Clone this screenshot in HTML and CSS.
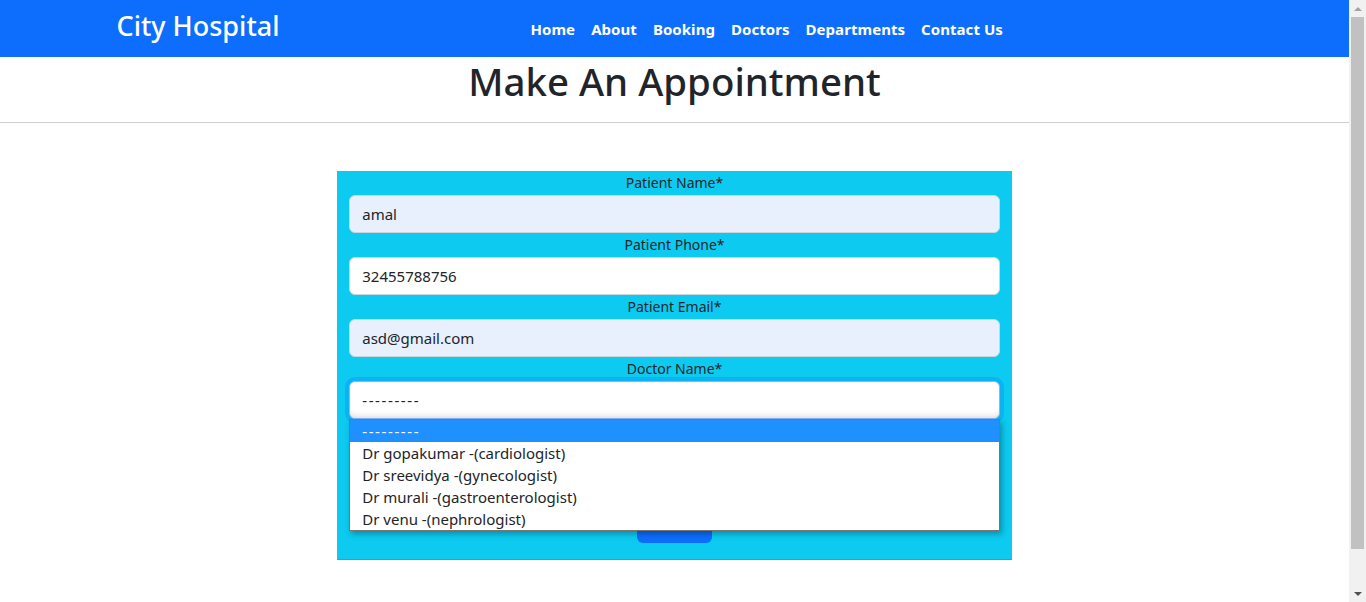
FILE: index.html
```html
<!DOCTYPE html>
<html lang="en">
<head>
<meta charset="utf-8">
<title>City Hospital - Make An Appointment</title>
<link rel="stylesheet" href="styles.css">
</head>
<body>
<nav class="navbar">
  <div class="container nav-inner">
    <a class="brand" href="#">City Hospital</a>
    <ul class="nav-links">
      <li><a href="#">Home</a></li>
      <li><a href="#">About</a></li>
      <li><a href="#">Booking</a></li>
      <li><a href="#">Doctors</a></li>
      <li><a href="#">Departments</a></li>
      <li><a href="#">Contact Us</a></li>
    </ul>
  </div>
</nav>
<main class="page">
  <h1 class="title">Make An Appointment</h1>
  <hr class="rule">
  <form class="booking">
    <label class="lbl">Patient Name*</label>
    <input class="field autofill" type="text" value="amal">
    <label class="lbl">Patient Phone*</label>
    <input class="field" type="text" value="32455788756">
    <label class="lbl">Patient Email*</label>
    <input class="field autofill" type="text" value="asd@gmail.com">
    <label class="lbl">Doctor Name*</label>
    <div class="select-wrap">
      <div class="field select-box"><span class="dashes">---------</span></div>
      <ul class="dropdown">
        <li class="opt active"><span class="dashes">---------</span></li>
        <li class="opt">Dr gopakumar -(cardiologist)</li>
        <li class="opt">Dr sreevidya -(gynecologist)</li>
        <li class="opt">Dr murali -(gastroenterologist)</li>
        <li class="opt">Dr venu -(nephrologist)</li>
      </ul>
    </div>
    <label class="lbl">Booking Date*</label>
    <input class="field" type="text" value="">
    <div class="btn-row"><button class="btn" type="button">Submit</button></div>
  </form>
</main>
<div class="scrollbar" aria-hidden="true">
  <div class="sb-arrow up"></div>
  <div class="sb-track"><div class="sb-thumb"></div></div>
  <div class="sb-arrow down"></div>
</div>
</body>
</html>
```
FILE: styles.css
```css
* { box-sizing: border-box; }
html { overflow: hidden; }
html, body { margin: 0; padding: 0; }
body {
  font-family: "Noto Sans", "Open Sans", sans-serif;
  font-size: 16px;
  line-height: 1.5;
  color: #212529;
  background: #fff;
  padding-right: 17px;
}
.navbar {
  background: #0d6efd;
  height: 57px;
  display: flex;
  align-items: center;
}
.container {
  width: 1140px;
  margin: 0 auto;
  padding: 0 12px;
}
.nav-inner {
  display: flex;
  align-items: center;
}
.brand {
  color: #fff;
  text-decoration: none;
  font-size: 27px;
  font-weight: 500;
  line-height: 1.2;
  margin-right: 16px;
  padding-bottom: 4px;
}
.nav-links {
  list-style: none;
  margin: 0 0 0 227px;
  padding: 0;
  display: flex;
}
.nav-links a {
  display: block;
  color: #fff;
  text-decoration: none;
  font-weight: 700;
  font-size: 15px;
  padding: 8px 8px 7px;
  letter-spacing: 0.05px;
}
.page { padding-bottom: 40px; }
.title {
  margin: 0;
  text-align: center;
  font-size: 38.4px;
  font-weight: 500;
  line-height: 49px;
}
.rule {
  margin: 16px 0 0;
  border: 0;
  border-top: 1px solid #cfcfcf;
}
.booking {
  width: 50%;
  margin: 48px auto 0;
  background: #0dcaf0;
  padding: 0 12px 16px;
  display: flex;
  flex-direction: column;
  border-bottom: 1px solid #0bb3d4;
}
.lbl {
  text-align: center;
  font-size: 14px;
  line-height: 24px;
  display: block;
}
.field {
  display: block;
  width: 100%;
  height: 38px;
  padding: 6px 12px;
  font: inherit;
  font-size: 15px;
  line-height: 24px;
  color: #212529;
  background: #fff;
  border: 1px solid #ced4da;
  border-radius: 6px;
  outline: none;
}
.field.autofill { background: #e8f0fe; }
.dashes { letter-spacing: 1.6px; }
.select-wrap { position: relative; }
.select-box {
  border-color: #86b7fe;
  box-shadow: 0 0 0 4px rgba(13,110,253,.25), inset 0 -6px 6px -4px rgba(0,0,0,.12);
}
.dropdown {
  position: absolute;
  left: 0;
  right: 0;
  top: 38px;
  margin: 0;
  padding: 0;
  list-style: none;
  background: #fff;
  border: 1px solid #767676;
  box-shadow: 2px 3px 6px rgba(0,0,0,.3);
  z-index: 5;
}
.opt {
  height: 22px;
  line-height: 22px;
  padding: 0 12px;
  font-size: 15px;
  color: #212529;
}
.opt.active { background: #1e90ff; color: #fff; }
.btn-row { display: flex; justify-content: center; margin-top: 24px; }
.btn {
  width: 75px;
  height: 38px;
  background: #0d6efd;
  color: #fff;
  border: 0;
  border-radius: 6px;
  font: inherit;
}
.scrollbar {
  position: fixed;
  top: 0;
  right: 0;
  width: 17px;
  height: 100%;
  background: #f1f1f1;
  display: flex;
  flex-direction: column;
}
.sb-arrow {
  height: 17px;
  display: flex;
  align-items: center;
  justify-content: center;
}
.sb-arrow::before {
  content: "";
  width: 0;
  height: 0;
  border-left: 4px solid transparent;
  border-right: 4px solid transparent;
}
.sb-arrow.up::before { border-bottom: 4px solid #a3a3a3; }
.sb-arrow.down::before { border-top: 4px solid #505050; }
.sb-track { flex: 1; padding: 0 2px; }
.sb-thumb {
  height: 532px;
  background: #c1c1c1;
}
```
